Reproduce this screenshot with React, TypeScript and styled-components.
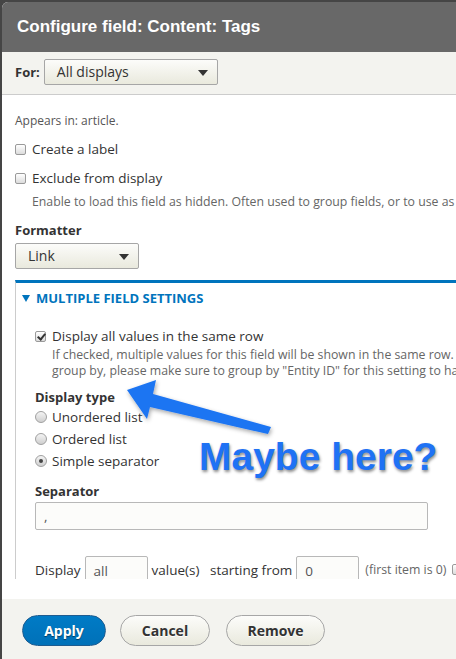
import React from "react";
import styled, { createGlobalStyle } from "styled-components";

const GlobalStyle = createGlobalStyle`
	html, body {
		margin: 0;
		padding: 0;
		background: #454545;
		overflow: hidden;
	}
	body {
		font-family: "Open Sans", "DejaVu Sans", sans-serif;
		color: #333;
	}
`;

const Page = styled.div`
	position: relative;
	width: 456px;
	height: 659px;
	padding: 2px 0 0 2px;
	box-sizing: border-box;
	overflow: hidden;
`;

const Dialog = styled.div`
	width: 640px;
	height: 657px;
	background: #fff;
	border-radius: 6px 6px 0 0;
	overflow: hidden;
	display: flex;
	flex-direction: column;
`;

const TitleBar = styled.div`
	height: 50px;
	flex: none;
	background: #686868;
	display: flex;
	align-items: center;
	padding: 0 15px;
`;

const Title = styled.h1`
	margin: 0;
	font-family: "Liberation Sans", Arial, sans-serif;
	font-size: 17px;
	font-weight: bold;
	color: #fff;
`;

const ForBar = styled.div`
	height: 43px;
	flex: none;
	box-sizing: border-box;
	background: #f3f3ef;
	border-bottom: 1px solid #ccc;
	display: flex;
	align-items: center;
	padding: 0 13px 2px;
	gap: 4px;
`;

const BoldLabel = styled.span`
	font-weight: bold;
	font-size: 13px;
	color: #333;
`;

const Select = styled.div<{ w: number }>`
	position: relative;
	width: ${({ w }) => w}px;
	height: 26px;
	box-sizing: border-box;
	border: 1px solid #a6a6a6;
	border-radius: 2px;
	background: linear-gradient(#fcfcfa, #e9e9dd);
	font-size: 14px;
	line-height: 24px;
	padding-left: 12px;
	color: #333;
	&::after {
		content: "";
		position: absolute;
		right: 9px;
		top: 10px;
		border-left: 5px solid transparent;
		border-right: 5px solid transparent;
		border-top: 6px solid #333;
	}
`;

const Body = styled.div`
	height: 484px;
	flex: none;
	overflow: hidden;
	padding: 0 13px;
`;

const Spacer = styled.div`
	height: 20px;
	flex: none;
	background: #fff;
`;

const Appears = styled.div`
	margin-top: 17px;
	font-size: 12px;
	line-height: 18px;
	color: #555;
`;

const CheckRow = styled.label<{ mt: number }>`
	display: flex;
	align-items: center;
	gap: 6px;
	margin-top: ${({ mt }) => mt}px;
	height: 20px;
	font-size: 13.5px;
	color: #333;
`;

const Box = styled.span<{ checked?: boolean }>`
	position: relative;
	width: 11px;
	height: 11px;
	box-sizing: border-box;
	border: 1px solid #9a9a9a;
	border-radius: 2px;
	background: linear-gradient(#fff, #dcdcdc);
	flex: none;
	&::after {
		content: ${({ checked }) => (checked ? '""' : "none")};
		position: absolute;
		left: 3px;
		top: 0px;
		width: 3px;
		height: 6px;
		border: solid #333;
		border-width: 0 2px 2px 0;
		transform: rotate(40deg);
	}
`;

const TrailingBox = styled(Box)`
	margin-top: 8px;
	margin-left: 2px;
`;

const Radio = styled.span<{ checked?: boolean }>`
	position: relative;
	width: 12px;
	height: 12px;
	box-sizing: border-box;
	border: 1px solid #a0a0a0;
	border-radius: 50%;
	background: linear-gradient(#f4f4f4, #cfcfcf);
	flex: none;
	&::after {
		content: ${({ checked }) => (checked ? '""' : "none")};
		position: absolute;
		left: 3px;
		top: 3px;
		width: 4px;
		height: 4px;
		border-radius: 50%;
		background: #444;
	}
`;

const Description = styled.div<{ mt: number }>`
	margin-top: ${({ mt }) => mt}px;
	padding-left: 17px;
	font-size: 12.3px;
	line-height: 16px;
	color: #666;
	white-space: nowrap;
`;

const FieldLabel = styled.div<{ mt: number }>`
	margin-top: ${({ mt }) => mt}px;
	font-size: 13px;
	font-weight: bold;
	line-height: 18px;
	color: #333;
`;

const SelectWrap = styled.div`
	margin-top: 4px;
`;

const Fieldset = styled.div`
	margin-top: 11px;
	border-top: 3px solid #0074bd;
	border-left: 1px solid #ccc;
	padding: 6px 0 0 6px;
`;

const Legend = styled.div`
	display: flex;
	align-items: center;
	gap: 6px;
	height: 18px;
	font-size: 13px;
	font-weight: bold;
	color: #0074bd;
	&::before {
		content: "";
		border-left: 4px solid transparent;
		border-right: 4px solid transparent;
		border-top: 7px solid #0074bd;
	}
`;

const Inner = styled.div`
	padding-left: 13px;
`;

const RadioRow = styled.label`
	display: flex;
	align-items: center;
	gap: 5px;
	height: 22px;
	font-size: 13.5px;
	color: #333;
`;

const TextInput = styled.div<{ w: number; h: number }>`
	width: ${({ w }) => w}px;
	height: ${({ h }) => h}px;
	box-sizing: border-box;
	border: 1px solid #b8b8b8;
	border-radius: 2px;
	background: #fcfcfa;
	font-size: 13.5px;
	padding: 0 8px;
	line-height: ${({ h }) => h - 2}px;
	color: #555;
	flex: none;
`;

const SepInput = styled(TextInput)`
	margin-top: 2px;
`;

const InlineRow = styled.div`
	margin-top: 26px;
	display: flex;
	align-items: flex-start;
	gap: 4px;
	height: 30px;
	font-size: 13.5px;
	color: #333;
	white-space: nowrap;
`;

const InlineText = styled.span<{ small?: boolean }>`
	line-height: 26px;
	font-size: ${({ small }) => (small ? "12.3px" : "13.5px")};
	color: ${({ small }) => (small ? "#666" : "#333")};
	margin: 1px ${({ small }) => (small ? "0 0 2px" : "0")};
`;

const Footer = styled.div`
	flex: 1;
	background: #f3f3ef;
	display: flex;
	align-items: flex-start;
	padding: 16px 20px 0;
`;

const Button = styled.button<{ primary?: boolean; w: number; ml: number }>`
	width: ${({ w }) => w}px;
	height: 31px;
	margin-left: ${({ ml }) => ml}px;
	border-radius: 20px;
	font-family: "Open Sans", "DejaVu Sans", sans-serif;
	font-size: 14px;
	font-weight: bold;
	padding: 0;
	border: 1px solid ${({ primary }) => (primary ? "#1e5c90" : "#a6a6a6")};
	background: ${({ primary }) =>
		primary ? "linear-gradient(#007bc6, #0071b8)" : "linear-gradient(#fcfcfa, #e9e9dd)"};
	color: ${({ primary }) => (primary ? "#fff" : "#333")};
	text-shadow: ${({ primary }) => (primary ? "0 1px 1px rgba(0,0,0,0.5)" : "0 1px #fff")};
`;

const Overlay = styled.svg`
	position: absolute;
	left: 0;
	top: 0;
	pointer-events: none;
`;

const Callout = styled.div`
	position: absolute;
	left: 199px;
	top: 437px;
	font-family: "Liberation Sans", Arial, sans-serif;
	font-size: 39px;
	font-weight: bold;
	line-height: 39px;
	color: #1f72f4;
	-webkit-text-stroke: 5px #fff;
	paint-order: stroke fill;
	text-shadow: 1px 2px 3px rgba(0, 0, 0, 0.45);
	white-space: nowrap;
`;

export default function App() {
	return (
		<>
			<GlobalStyle />
			<Page>
				<Dialog>
					<TitleBar>
						<Title>Configure field: Content: Tags</Title>
					</TitleBar>
					<ForBar>
						<BoldLabel>For:</BoldLabel>
						<Select w={174}>All displays</Select>
					</ForBar>
					<Body>
						<Appears>Appears in: article.</Appears>
						<CheckRow mt={9}>
							<Box />
							Create a label
						</CheckRow>
						<CheckRow mt={9}>
							<Box />
							Exclude from display
						</CheckRow>
						<Description mt={6}>
							Enable to load this field as hidden. Often used to group fields, or to use as
						</Description>
						<FieldLabel mt={11}>Formatter</FieldLabel>
						<SelectWrap>
							<Select w={124}>Link</Select>
						</SelectWrap>
						<Fieldset>
							<Legend>MULTIPLE FIELD SETTINGS</Legend>
							<Inner>
								<CheckRow mt={19}>
									<Box checked />
									Display all values in the same row
								</CheckRow>
								<Description mt={1}>
									If checked, multiple values for this field will be shown in the same row.
									<br />
									group by, please make sure to group by "Entity ID" for this setting to ha
								</Description>
								<FieldLabel mt={9}>Display type</FieldLabel>
								<RadioRow>
									<Radio />
									Unordered list
								</RadioRow>
								<RadioRow>
									<Radio />
									Ordered list
								</RadioRow>
								<RadioRow>
									<Radio checked />
									Simple separator
								</RadioRow>
								<FieldLabel mt={10}>Separator</FieldLabel>
								<SepInput w={393} h={28}>,</SepInput>
								<InlineRow>
									<InlineText>Display</InlineText>
									<TextInput w={63} h={30}>all</TextInput>
									<InlineText>value(s)&nbsp;&nbsp;&nbsp;starting from</InlineText>
									<TextInput w={63} h={30}>0</TextInput>
									<InlineText small>(first item is 0)</InlineText>
									<TrailingBox />
								</InlineRow>
							</Inner>
						</Fieldset>
					</Body>
					<Spacer />
					<Footer>
						<Button primary w={84} ml={0}>Apply</Button>
						<Button w={90} ml={14}>Cancel</Button>
						<Button w={99} ml={16}>Remove</Button>
					</Footer>
				</Dialog>
				<Overlay width={456} height={659} viewBox="0 0 456 659">
					<defs>
						<filter id="sh" x="-20%" y="-50%" width="140%" height="200%">
							<feDropShadow dx="1" dy="2" stdDeviation="2" floodColor="#000" floodOpacity="0.35" />
						</filter>
					</defs>
					<polygon
						points="127,390 156,380 153,394 271,427 268,434 150,407 147,419"
						fill="#1c74f2"
						filter="url(#sh)"
					/>
				</Overlay>
				<Callout>Maybe here?</Callout>
			</Page>
		</>
	);
}
